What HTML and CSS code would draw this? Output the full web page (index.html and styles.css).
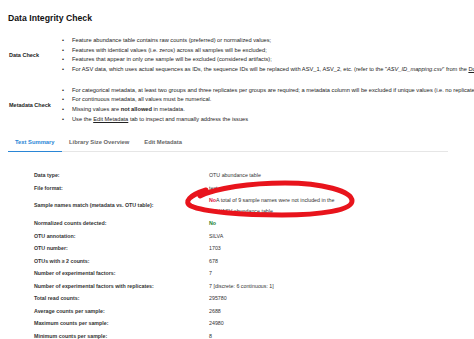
FILE: index.html
```html
<!DOCTYPE html>
<html>
<head>
<meta charset="utf-8">
<link rel="stylesheet" href="styles.css">
</head>
<body>
<h1 class="title">Data Integrity Check</h1>

<section class="check check-data">
  <div class="check-label">Data Check</div>
  <ul class="check-list">
    <li>Feature abundance table contains raw counts (preferred) or normalized values;</li>
    <li>Features with identical values (i.e. zeros) across all samples will be excluded;</li>
    <li>Features that appear in only one sample will be excluded (considered artifacts);</li>
    <li>For ASV data, which uses actual sequences as IDs, the sequence IDs will be replaced with ASV_1, ASV_2, etc. (refer to the "<i>ASV_ID_mapping.csv</i>" from the <u>Download</u> tab)</li>
  </ul>
</section>

<section class="check check-meta">
  <div class="check-label">Metadata Check</div>
  <ul class="check-list">
    <li>For categorical metadata, at least two groups and three replicates per groups are required; a metadata column will be excluded if unique values (i.e. no replicates) are found;</li>
    <li>For continuous metadata, all values must be numerical.</li>
    <li>Missing values are <b>not allowed</b> in metadata.</li>
    <li>Use the <u>Edit Metadata</u> tab to inspect and manually address the issues</li>
  </ul>
</section>

<nav class="tabs">
  <div class="tab tab-active">Text Summary</div>
  <div class="tab">Library Size Overview</div>
  <div class="tab">Edit Metadata</div>
</nav>

<div class="summary">
  <div class="k">Data type:</div><div class="v">OTU abundance table</div>
  <div class="k">File format:</div><div class="v">text</div>
  <div class="k">Sample names match (metadata vs. OTU table):</div><div class="v"><b class="no-red">No</b>A total of 9 sample names were not included in the OTU/ASV abundance table</div>
  <div class="k">Normalized counts detected:</div><div class="v"><b class="no-green">No</b></div>
  <div class="k">OTU annotation:</div><div class="v">SILVA</div>
  <div class="k">OTU number:</div><div class="v">1703</div>
  <div class="k">OTUs with ≥ 2 counts:</div><div class="v">678</div>
  <div class="k">Number of experimental factors:</div><div class="v">7</div>
  <div class="k">Number of experimental factors with replicates:</div><div class="v">7 [discrete: 6 continuous: 1]</div>
  <div class="k">Total read counts:</div><div class="v">295780</div>
  <div class="k">Average counts per sample:</div><div class="v">2688</div>
  <div class="k">Maximum counts per sample:</div><div class="v">24980</div>
  <div class="k">Minimum counts per sample:</div><div class="v">8</div>
</div>

<svg class="annotation" width="474" height="339" viewBox="0 0 474 339">
  <path d="M 200 196 C 216 188, 250 183, 285 183 C 322 183, 352 191, 352 201 C 352 210, 322 215, 282 215 C 242 215, 204 212, 191 206 C 183 202, 190 195, 206 190" fill="none" stroke="#e8141c" stroke-width="5" stroke-linecap="round" stroke-linejoin="round"/>
</svg>
</body>
</html>
```

FILE: styles.css
```css
html, body {
  margin: 0;
  padding: 0;
  background: #ffffff;
}

body {
  position: relative;
  padding-left: 8px;
  overflow: hidden;
  height: 339px;
  font-family: "Liberation Sans", Arial, sans-serif;
  color: #222222;
}

.title {
  margin: 12px 0 0;
  font-size: 8.7px;
  line-height: 12px;
  font-weight: bold;
  color: #111111;
}

.check {
  display: flex;
  align-items: center;
  white-space: nowrap;
}

.check-data {
  margin-top: 12px;
}

.check-meta {
  margin-top: 11.5px;
}

.check-label {
  flex: 0 0 54px;
  padding-left: 1px;
  box-sizing: border-box;
  font-size: 5.5px;
  font-weight: bold;
  color: #222222;
}

.check-list {
  list-style: none;
  margin: 0;
  padding: 0;
  font-size: 5.7px;
  line-height: 9.6px;
  color: #222222;
}

.check-list li::before {
  content: "•";
  display: inline-block;
  width: 10px;
  color: #222222;
}

.tabs {
  display: flex;
  width: 440px;
  margin-top: 7.4px;
  border-bottom: 1px solid #e6e6e6;
}

.tab {
  padding: 6px 7.5px 5.5px;
  font-size: 5.8px;
  line-height: 8px;
  font-weight: bold;
  color: #666666;
}

.tab-active {
  color: #2a86d6;
  border-bottom: 1.5px solid #2a86d6;
  margin-bottom: -1px;
  padding-left: 7px;
  padding-right: 7px;
}

.summary {
  display: grid;
  grid-template-columns: 175px 134px;
  align-items: center;
  margin: 17px 0 0 26px;
  font-size: 5.3px;
  line-height: 10.5px;
  color: #333333;
}

.summary .k,
.summary .v {
  padding: 1px 0;
}

.summary .k {
  font-weight: bold;
  color: #333333;
}

.no-red {
  color: #e0143c;
}

.no-green {
  color: #1d7f2c;
}

.annotation {
  position: absolute;
  left: 0;
  top: 0;
  pointer-events: none;
}
```
